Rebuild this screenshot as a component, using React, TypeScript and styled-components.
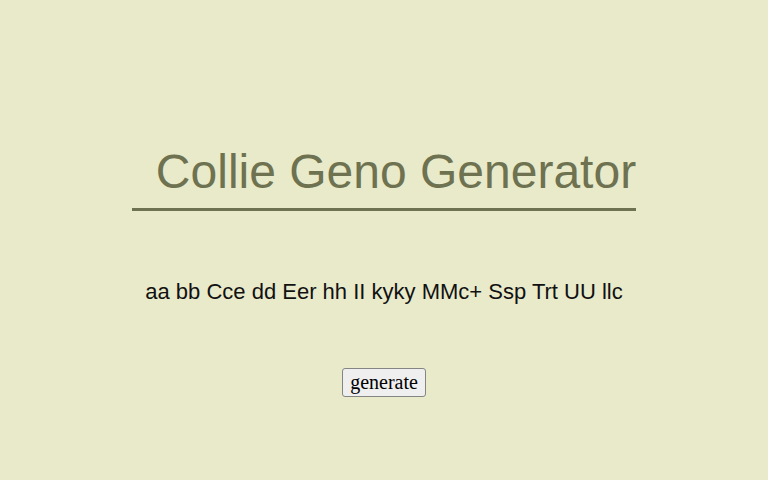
import React, { useState } from 'react';
import styled, { createGlobalStyle } from 'styled-components';

const GlobalStyle = createGlobalStyle`
  html, body {
    margin: 0;
    background: #e8eaca;
  }
`;

const Wrapper = styled.main`
  min-height: 480px;
  display: flex;
  flex-direction: column;
  align-items: center;
  padding-top: 144px;
  box-sizing: border-box;
`;

const Title = styled.h1`
  font-family: "Liberation Sans", Arial, sans-serif;
  font-weight: normal;
  font-size: 48px;
  line-height: 56px;
  color: #6e7250;
  margin: 0;
  padding: 0 0 8px 24px;
  border-bottom: 3px solid #6e7250;
`;

const Geno = styled.p`
  font-family: "Liberation Sans", Arial, sans-serif;
  font-size: 22px;
  line-height: 26px;
  color: #111;
  margin: 68px 0 0;
`;

const Button = styled.button`
  margin-top: 63px;
  font-family: "Liberation Serif", "Times New Roman", serif;
  font-size: 20px;
  line-height: 23px;
  padding: 2px 7px;
  background: #efeff0;
  border: 1px solid #858585;
  border-radius: 3px;
  color: #000;
`;

const genes = 'aa bb Cce dd Eer hh II kyky MMc+ Ssp Trt UU llc';

function App() {
  const [geno, setGeno] = useState(genes);

  return (
    <>
      <GlobalStyle />
      <Wrapper>
        <Title>Collie Geno Generator</Title>
        <Geno>{geno}</Geno>
        <Button onClick={() => setGeno(genes)}>generate</Button>
      </Wrapper>
    </>
  );
}

export default App;
